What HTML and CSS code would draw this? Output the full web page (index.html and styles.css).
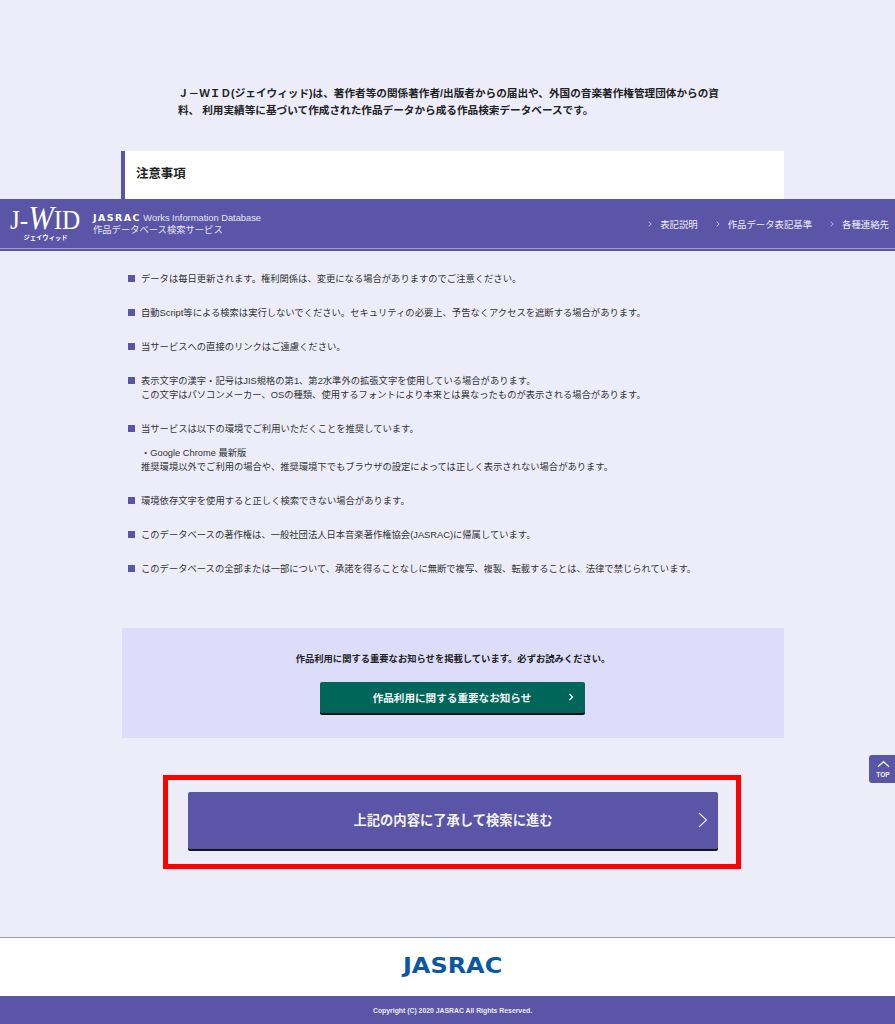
FILE: index.html
```html
<!DOCTYPE html>
<html lang="ja">
<head>
<meta charset="utf-8">
<title>J-WID</title>
<link rel="stylesheet" href="styles.css">
</head>
<body>
<header class="site-header">
  <div class="brand">
    <div class="logo">
      <div class="logo-main">J-<span class="logo-w">W</span>ID</div>
      <div class="logo-kana">ジェイウィッド</div>
    </div>
    <div class="brand-text">
      <div class="brand-line"><span class="brand-jasrac">JASRAC</span> Works Information Database</div>
      <div class="brand-sub">作品データベース検索サービス</div>
    </div>
  </div>
  <nav class="nav">
    <a class="nav-item"><svg class="nav-chev" viewBox="0 0 4 6"><path d="M.7.6 3.2 3 .7 5.4"/></svg>表記説明</a>
    <a class="nav-item"><svg class="nav-chev" viewBox="0 0 4 6"><path d="M.7.6 3.2 3 .7 5.4"/></svg>作品データ表記基準</a>
    <a class="nav-item"><svg class="nav-chev" viewBox="0 0 4 6"><path d="M.7.6 3.2 3 .7 5.4"/></svg>各種連絡先</a>
  </nav>
</header>

<main class="main">
  <p class="intro">Ｊ－ＷＩＤ(ジェイウィッド)は、著作者等の関係著作者/出版者からの届出や、外国の音楽著作権管理団体からの資料、 利用実績等に基づいて作成された作品データから成る作品検索データベースです。</p>
  <div class="title-card"><h2 class="title">注意事項</h2></div>
  <ul class="notes">
    <li>データは毎日更新されます。権利関係は、変更になる場合がありますのでご注意ください。</li>
    <li>自動Script等による検索は実行しないでください。セキュリティの必要上、予告なくアクセスを遮断する場合があります。</li>
    <li>当サービスへの直接のリンクはご遠慮ください。</li>
    <li>表示文字の漢字・記号はJIS規格の第1、第2水準外の拡張文字を使用している場合があります。<br>この文字はパソコンメーカー、OSの種類、使用するフォントにより本来とは異なったものが表示される場合があります。</li>
    <li>当サービスは以下の環境でご利用いただくことを推奨しています。
      <p class="env">・Google Chrome 最新版<br>推奨環境以外でご利用の場合や、推奨環境下でもブラウザの設定によっては正しく表示されない場合があります。</p>
    </li>
    <li>環境依存文字を使用すると正しく検索できない場合があります。</li>
    <li>このデータベースの著作権は、一般社団法人日本音楽著作権協会(JASRAC)に帰属しています。</li>
    <li>このデータベースの全部または一部について、承諾を得ることなしに無断で複写、複製、転載することは、法律で禁じられています。</li>
  </ul>
  <section class="notice">
    <p class="notice-text">作品利用に関する重要なお知らせを掲載しています。必ずお読みください。</p>
    <a class="notice-btn">作品利用に関する重要なお知らせ<svg class="notice-chev" viewBox="0 0 6 8"><path d="M1.5 1 4.5 4 1.5 7"/></svg></a>
  </section>
  <div class="highlight">
    <a class="proceed-btn">上記の内容に了承して検索に進む<svg class="proceed-chev" viewBox="0 0 10 16"><path d="M1 1 8.5 8 1 15"/></svg></a>
  </div>
</main>

<a class="to-top"><svg class="to-top-icon" viewBox="0 0 14 8"><path d="M1 7 7 1.5 13 7"/></svg><span>TOP</span></a>

<footer class="footer">
  <div class="footer-logo"><span class="jasrac-logo">JASRAC</span></div>
  <div class="copyright">Copyright (C) 2020 JASRAC All Rights Reserved.</div>
</footer>
</body>
</html>
```
FILE: styles.css
```css
* { box-sizing: border-box; }
html, body { margin: 0; padding: 0; }
body {
  position: relative;
  width: 895px;
  height: 1024px;
  overflow: hidden;
  background: #ecedf9;
  color: #333;
  font-family: "Liberation Sans", "Noto Sans CJK JP", sans-serif;
  font-size: 9.3px;
  display: flex;
  flex-direction: column;
}
a { color: inherit; text-decoration: none; }

.site-header {
  position: absolute;
  top: 199px;
  left: 0;
  width: 895px;
  height: 52px;
  background: #5a55a6;
  border-bottom: 1px solid #5a55a6;
  color: #fff;
  display: flex;
  justify-content: space-between;
  align-items: center;
  padding: 0 6px 2px 10px;
}
.site-header::after {
  content: "";
  position: absolute;
  left: 0;
  right: 0;
  bottom: 1px;
  height: 1px;
  background: #a19dd0;
}
.brand { display: flex; align-items: center; gap: 12px; }
.logo { width: 71px; text-align: center; margin-top: -2px; }
.logo-main {
  font-family: "Liberation Serif", serif;
  font-size: 28px;
  line-height: 27px;
  transform: scaleX(.9);
  transform-origin: left center;
  white-space: nowrap;
  text-align: left;
}
.logo-w { font-style: italic; font-size: 34px; line-height: 27px; }
.logo-kana { font-size: 6.3px; font-weight: 700; line-height: 8px; margin-top: 1px; }
.brand-text { color: #e6e5f4; margin-top: 1px; }
.brand-line { font-size: 9.3px; line-height: 12px; white-space: nowrap; }
.brand-jasrac {
  font-family: "DejaVu Sans", sans-serif;
  font-size: 9.5px;
  font-weight: 700;
  letter-spacing: 1.4px;
  color: #fff;
}
.brand-sub { font-size: 9.3px; line-height: 13px; }
.nav { display: flex; gap: 17px; font-size: 9.4px; color: #eeedf8; }
.nav-item { display: flex; align-items: center; white-space: nowrap; }
.nav-chev { width: 4px; height: 6px; margin: 0 8px 0 1px; fill: none; stroke: #d8d6ee; stroke-width: .8; }

.main { flex: 1; padding-top: 85px; }
.intro {
  margin: 0 0 0 178px;
  width: 548px;
  font-size: 10.63px;
  line-height: 17px;
  font-weight: 700;
  color: #222;
}
.title-card {
  margin: 32px 0 0 121px;
  width: 663px;
  height: 60px;
  background: #fff;
  border-left: 4px solid #5a55a6;
  padding: 16px 0 0 11px;
}
.title { margin: 0; font-size: 12.4px; line-height: 15px; font-weight: 700; color: #222; }

.notes { list-style: none; margin: 61px 0 0 128px; padding: 0; width: 656px; }
.notes li { position: relative; padding-left: 13px; line-height: 14.2px; margin-bottom: 19.8px; }
.notes li::before {
  content: "";
  position: absolute;
  left: 0;
  top: 3px;
  width: 7px;
  height: 7px;
  background: #5a55a6;
}
.env { margin: 9.8px 0 0; }

.notice {
  margin: 51px 0 0 122px;
  width: 662px;
  height: 110px;
  background: #ddddf9;
  padding-top: 24px;
  display: flex;
  flex-direction: column;
  align-items: center;
}
.notice-text { margin: 0; font-weight: 700; line-height: 14px; color: #222; }
.notice-btn {
  position: relative;
  margin: 16px 2px 0 0;
  width: 265px;
  height: 31px;
  background: #00655a;
  border-radius: 2px;
  box-shadow: 0 2px 0 #111;
  color: #f2f8f7;
  font-size: 10.6px;
  font-weight: 700;
  display: flex;
  align-items: center;
  justify-content: center;
}
.notice-chev {
  position: absolute;
  right: 11px;
  top: 11.5px;
  width: 6px;
  height: 8px;
  fill: none;
  stroke: #fff;
  stroke-width: 1.2;
}
.highlight {
  margin: 37px 0 0 163px;
  width: 578px;
  height: 94px;
  border: 5px solid #fe0000;
  padding: 12px 0 0 20px;
}
.proceed-btn {
  position: relative;
  width: 530px;
  height: 57px;
  background: #5a55a6;
  border-radius: 2px;
  box-shadow: 0 2px 0 #16141f;
  color: #f3f3fa;
  font-size: 13.3px;
  font-weight: 700;
  display: flex;
  align-items: center;
  justify-content: center;
  padding-bottom: 2px;
}
.proceed-chev {
  position: absolute;
  right: 10px;
  top: 20px;
  width: 10px;
  height: 16px;
  fill: none;
  stroke: #ebeaf6;
  stroke-width: 1.1;
}

.to-top {
  position: absolute;
  right: 0;
  top: 755px;
  width: 26px;
  height: 28px;
  background: #5a55a6;
  border-radius: 3px 0 0 3px;
  color: #f2f2fa;
  font-size: 6.6px;
  font-weight: 700;
  display: flex;
  flex-direction: column;
  align-items: center;
  padding: 5px 0 0 2px;
}
.to-top-icon { width: 13px; height: 8px; fill: none; stroke: #f2f2fa; stroke-width: 1.4; margin-bottom: 3px; }

.footer { height: 87px; flex: none; }
.footer-logo {
  height: 59px;
  background: #fff;
  border-top: 1px solid #9f99cf;
  padding: 0 0 3px 10px;
  display: flex;
  align-items: center;
  justify-content: center;
}
.jasrac-logo {
  font-family: "DejaVu Sans", sans-serif;
  font-size: 22px;
  font-weight: 700;
  color: #0b57a5;
  transform: scaleX(1.09);
}
.copyright {
  height: 28px;
  background: #5a55a6;
  color: #ecebf7;
  font-size: 6.85px;
  font-weight: 700;
  line-height: 29px;
  padding-left: 10px;
  text-align: center;
}
```
